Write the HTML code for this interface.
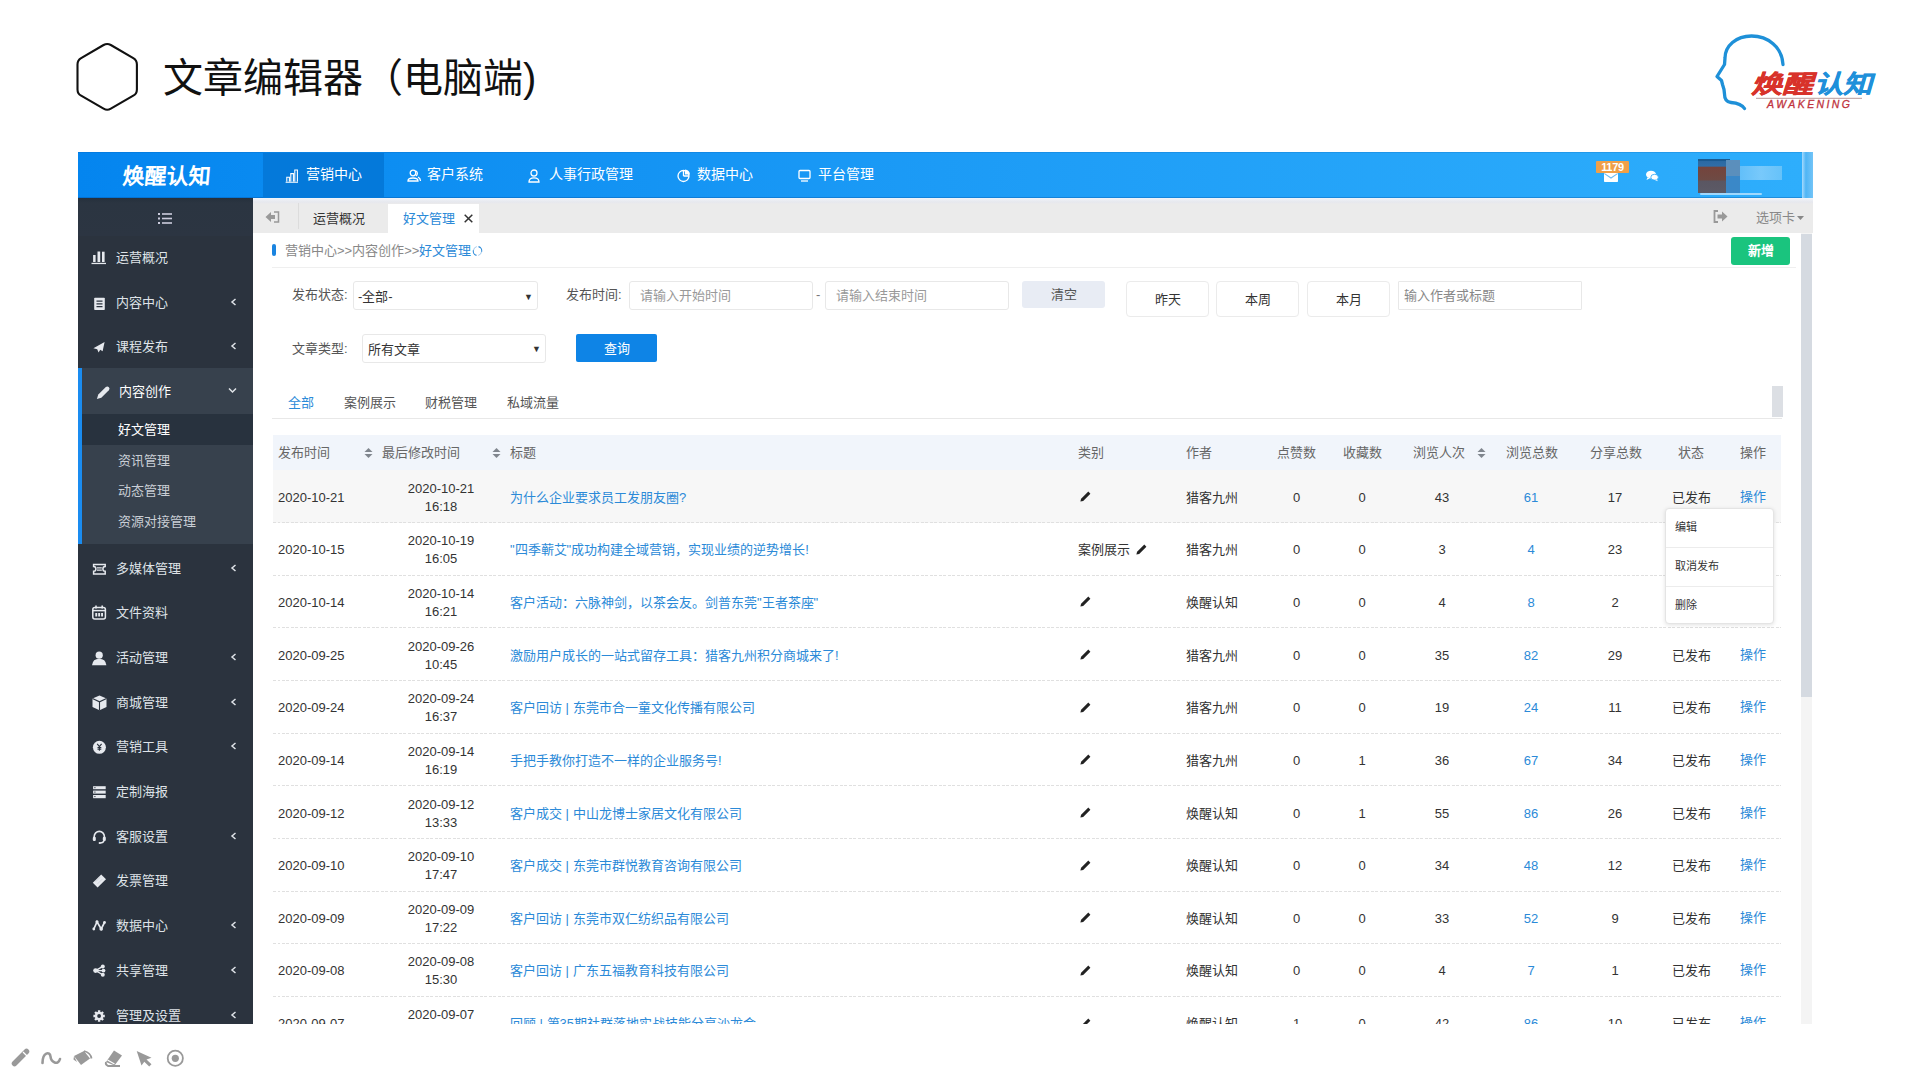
<!DOCTYPE html>
<html lang="zh-CN"><head><meta charset="utf-8">
<style>
*{box-sizing:border-box;margin:0;padding:0}
html,body{width:1920px;height:1080px;overflow:hidden;background:#fff}
body{position:relative;font-family:"Liberation Sans",sans-serif;color:#333}
.a{position:absolute;white-space:nowrap}
svg.a{overflow:visible}
#app{position:absolute;left:78px;top:152px;width:1735px;height:872px;overflow:hidden;background:#fff}
#hdr{position:absolute;left:0;top:0;width:1724px;height:46px;background:linear-gradient(90deg,#0485ef 0%,#0a8bf1 12%,#1c9bf6 50%,#2eaefc 100%);border-top:1px solid rgba(0,80,160,0.18);border-bottom:1px solid rgba(0,70,150,0.3)}
#hstrip{position:absolute;left:1724px;top:0;width:11px;height:46px;background:linear-gradient(90deg,#a6dafc,#4fb5f5 35%,#73c4f7)}
#side{position:absolute;left:0;top:46px;width:175px;height:826px;background:#2b333e}
#tabs{position:absolute;left:175px;top:46px;width:1560px;height:35px;background:linear-gradient(180deg,#f2f5fa 0,#e6e8ee 4px,#ebebeb 6px)}
#sb{position:absolute;left:1723px;top:81px;width:11px;height:791px;background:#f4f4f4}
#sbt{position:absolute;left:1723px;top:82px;width:11px;height:463px;background:#d5dae1}
.nav{position:absolute;top:0;height:46px;line-height:45px;font-size:14px;color:#fff}
.si{position:absolute;left:0;width:175px;height:45px;line-height:45px;font-size:13px;color:#dfe3e8}
.si .t{position:absolute;left:38px;top:1px}
.si svg{position:absolute;left:14px;top:16px;overflow:visible}
.si svg.chev{position:absolute;left:152px;top:19px;width:7px;height:8px}
.sub{position:absolute;left:0;width:175px;height:30.5px;line-height:30px;font-size:13px;color:#c9ced5}
.sub .t{position:absolute;left:40px;top:2px}
.th{position:absolute;top:435px;height:34px;line-height:35px;font-size:13px;color:#666}
.cell{position:absolute;font-size:13px;color:#333;line-height:18px}
.lk{color:#2b8ad8}
.btn{position:absolute;border:1px solid #ebebeb;border-radius:4px;background:#fff;font-size:13px;color:#333;text-align:center}
.inp{position:absolute;border:1px solid #e8e8e8;border-radius:3px;background:#fff;font-size:13px;color:#999}
</style></head>
<body>

<svg class="a" style="left:74px;top:41px" width="66" height="72" viewBox="0 0 66 72">
<path d="M36.82 4.02 L59.28 17.18 Q62.90 19.30 62.90 23.50 L62.90 48.40 Q62.90 52.60 59.27 54.70 L36.83 67.70 Q33.20 69.80 29.57 67.70 L7.13 54.70 Q3.50 52.60 3.50 48.40 L3.50 23.50 Q3.50 19.30 7.12 17.18 L29.58 4.02 Q33.20 1.90 36.82 4.02 Z" fill="none" stroke="#111" stroke-width="2.1"/>
</svg>
<div class="a" style="left:163px;top:55px;font-size:40px;line-height:46px;color:#111">文章编辑器（电脑端)</div>

<svg class="a" style="left:0;top:0" width="1920" height="130" viewBox="0 0 1920 130">
<path d="M1783,64.5 C1782,47 1768,36 1751.5,36 C1736,36 1725,46 1725,58 L1724.5,64.5 L1717,76.5 L1721.5,80.5 L1722.5,84.5 L1724,89.5 L1724.5,94 C1724.5,99 1726,102 1731,102.5 C1737,103 1742,104.5 1744.5,108.5" fill="none" stroke="#1e90d8" stroke-width="3.3" stroke-linecap="round" stroke-linejoin="round"/>
<text x="1751" y="92.5" font-family="Liberation Sans" font-weight="bold" font-style="italic" font-size="25" fill="#d8322a" stroke="#d8322a" stroke-width="0.4" textLength="62" lengthAdjust="spacingAndGlyphs">焕醒</text>
<text x="1814" y="92.5" font-family="Liberation Sans" font-weight="bold" font-style="italic" font-size="25" fill="#1f90da" stroke="#1f90da" stroke-width="0.4" textLength="58" lengthAdjust="spacingAndGlyphs">认知</text>
<line x1="1756" y1="98.3" x2="1862" y2="98.3" stroke="#b89a9a" stroke-width="1"/>
<text x="1767" y="107.8" font-family="Liberation Sans" font-style="italic" font-size="10.5" fill="#c0343e" stroke="#c0343e" stroke-width="0.3" textLength="83" lengthAdjust="spacing">AWAKENING</text>
</svg>

<div id="app">
<div id="hdr"></div><div id="hstrip"></div>
<div class="a" style="left:44.5px;top:11.5px;font-size:22px;line-height:26px;font-weight:bold;color:#fff;transform:skewX(-5deg)">焕醒认知</div>
<div class="a" style="left:185px;top:1px;width:121px;height:45px;background:#0479da"></div>
<svg class="a" style="left:207px;top:17px" width="14" height="14" viewBox="0 0 14 14"><path d="M0.6 13.2 H13 M1.8 12.6 V8.2 H4.4 V12.6 M5.8 12.6 V4.6 H8.4 V12.6 M9.8 12.6 V1 H12.4 V12.6" stroke="#fff" fill="none" stroke-width="1.1"/></svg>
<div class="nav" style="left:228px">营销中心</div>
<svg class="a" style="left:329px;top:17px" width="14" height="14" viewBox="0 0 14 14"><circle cx="6" cy="4" r="2.8" stroke="#fff" fill="none" stroke-width="1.3"/><path d="M1 12 C1 8 11 8 11 12 Z" stroke="#fff" fill="none" stroke-width="1.3"/><path d="M9 2 A3 3 0 0 1 9 7 M11 8 C13 9 13.5 10 13.5 12" stroke="#fff" fill="none" stroke-width="1.3"/></svg>
<div class="nav" style="left:349px">客户系统</div>
<svg class="a" style="left:450px;top:17px" width="14" height="14" viewBox="0 0 14 14"><circle cx="6" cy="4" r="3" stroke="#fff" fill="none" stroke-width="1.3"/><path d="M1 13 C1 7.5 11 7.5 11 13 Z" stroke="#fff" fill="none" stroke-width="1.3"/></svg>
<div class="nav" style="left:471px">人事行政管理</div>
<svg class="a" style="left:599px;top:17px" width="14" height="14" viewBox="0 0 14 14"><circle cx="6.5" cy="7" r="5.5" stroke="#fff" fill="none" stroke-width="1.3"/><path d="M6.5 7 V1.5 M6.5 7 H12" stroke="#fff" fill="none" stroke-width="1.3"/><path d="M8 0.5 A5.5 5.5 0 0 1 13 5.5 H8 Z" fill="#fff"/></svg>
<div class="nav" style="left:619px">数据中心</div>
<svg class="a" style="left:720px;top:17px" width="14" height="14" viewBox="0 0 14 14"><rect x="1" y="1.5" width="11" height="8" rx="1" stroke="#fff" fill="none" stroke-width="1.3"/><path d="M3 12 H10" stroke="#fff" fill="none" stroke-width="1.3"/></svg>
<div class="nav" style="left:740px">平台管理</div>
<div class="a" style="left:1518px;top:8.5px;width:33px;height:12px;background:#f0a048;border-radius:1px;color:#fff;font-size:11px;font-weight:bold;line-height:12px;text-align:center;letter-spacing:-0.3px">1179</div>
<svg class="a" style="left:1526px;top:20.5px" width="14" height="9" viewBox="0 0 14 9"><rect x="0" y="0" width="14" height="9" rx="0.8" fill="#fff"/><path d="M0.5 0.6 L7 5 L13.5 0.6" stroke="#6cbdf5" stroke-width="1.1" fill="none"/></svg>
<svg class="a" style="left:1567px;top:18px" width="14" height="12" viewBox="0 0 14 12"><ellipse cx="6" cy="4.6" rx="5" ry="3.9" fill="#fff"/><path d="M2.5 7.5 L1.5 10 L5 8.3 Z" fill="#fff"/><ellipse cx="9.6" cy="7.2" rx="3.8" ry="2.9" fill="#fff" stroke="#2ba6f8" stroke-width="0.8"/><path d="M11.5 9.3 L13 11.3 L9.8 10 Z" fill="#fff"/></svg>
<div class="a" style="left:1620px;top:7.5px;width:28px;height:33.5px;background:linear-gradient(180deg,#2a68a0 0,#2f6ea8 19%,#74443c 21%,#6e4a44 60%,#5a5662 64%,#5c5a66 100%)"></div>
<div class="a" style="left:1620px;top:7px;width:32px;height:1.5px;background:#1a5a90"></div>
<div class="a" style="left:1648px;top:8px;width:14px;height:33px;background:linear-gradient(180deg,#5b8fbc 0,#5b8fbc 50%,#3a88c8 50%,#3a88c8 100%)"></div>
<div class="a" style="left:1662px;top:14px;width:42px;height:14px;background:linear-gradient(90deg,#62bff9,#78c9fb 50%,#66c2f9)"></div>
<div class="a" style="left:1622px;top:41px;width:62px;height:2px;background:#9fd8fd;border-radius:1px"></div>
<div id="side"></div>
<div class="a" style="left:0;top:46px;width:175px;height:38px;background:linear-gradient(180deg,#25303c 0,#2b3541 5px,#2c3542 100%)"></div>
<svg class="a" style="left:80px;top:61px" width="14" height="11" viewBox="0 0 14 11"><rect x="0" y="0" width="2" height="2" fill="#ccd"/><rect x="0" y="4.5" width="2" height="2" fill="#ccd"/><rect x="0" y="9" width="2" height="2" fill="#ccd"/><rect x="4" y="0.2" width="10" height="1.6" fill="#ccd"/><rect x="4" y="4.7" width="10" height="1.6" fill="#ccd"/><rect x="4" y="9.2" width="10" height="1.6" fill="#ccd"/></svg>
<div class="a" style="left:0;top:216px;width:175px;height:176px;background:#37414d"></div>
<div class="a" style="left:3px;top:262px;width:172px;height:30.5px;background:#28323e"></div>
<div class="a" style="left:0;top:216px;width:4px;height:176px;background:#1a8cf0"></div>
<div class="si" style="top:82.0px"><svg width="15" height="15" viewBox="0 0 15 15"><rect x="-0.5" y="12.8" width="14.5" height="1.3" fill="#e6e9ee"/><rect x="1.1" y="5" width="2.5" height="7" fill="#e6e9ee"/><rect x="5.5" y="1.5" width="2.7" height="10.5" fill="#e6e9ee"/><rect x="10" y="1.7" width="2.6" height="10.3" fill="#e6e9ee"/></svg><span class="t">运营概况</span></div>
<div class="si" style="top:126.7px"><svg width="15" height="15" viewBox="0 0 15 15"><rect x="2.2" y="2.8" width="10.6" height="12.2" rx="0.8" fill="#e6e9ee"/><path d="M4.5 6.2 H10.5 M4.5 8.9 H10.5 M4.5 11.6 H10.5" stroke="#2b333e" stroke-width="1.3"/></svg><span class="t">内容中心</span><svg class="chev" viewBox="0 0 7 8"><path d="M5.5 1 L2 4 L5.5 7" stroke="#dfe3e8" stroke-width="1.5" fill="none"/></svg></div>
<div class="si" style="top:171.4px"><svg width="15" height="15" viewBox="0 0 15 15"><path d="M12.6 3 L1.4 9.2 L5.2 10.2 L6.6 13.6 L8.2 10.8 L10.6 12.2 Z" fill="#e6e9ee"/></svg><span class="t">课程发布</span><svg class="chev" viewBox="0 0 7 8"><path d="M5.5 1 L2 4 L5.5 7" stroke="#dfe3e8" stroke-width="1.5" fill="none"/></svg></div>
<div class="si" style="top:216.1px;color:#fff"><svg width="15" height="15" style="left:18px" viewBox="0 0 15 15"><path d="M0.9 15 L2.3 10.6 L9.8 3.1 Q11.4 1.7 12.9 3.2 Q14.3 4.7 12.8 6.2 L5.3 13.7 Z" fill="#e6e9ee"/></svg><span class="t" style="left:41px">内容创作</span><svg class="chev" style="top:19px;width:9px;height:7px;left:150px" viewBox="0 0 9 7"><path d="M1 1.5 L4.5 5 L8 1.5" stroke="#dfe3e8" stroke-width="1.5" fill="none"/></svg></div>
<div class="sub" style="top:261.1px;color:#fff"><span class="t">好文管理</span></div>
<div class="sub" style="top:291.6px;color:#c9ced5"><span class="t">资讯管理</span></div>
<div class="sub" style="top:322.1px;color:#c9ced5"><span class="t">动态管理</span></div>
<div class="sub" style="top:352.6px;color:#c9ced5"><span class="t">资源对接管理</span></div>
<div class="si" style="top:392.5px"><svg width="15" height="15" viewBox="0 0 15 15"><path d="M1.6 3.4 H13.2 V5.6 A2.3 2.3 0 0 0 13.2 10.2 V12.9 H1.6 V10.2 A2.3 2.3 0 0 0 1.6 5.6 Z" stroke="#e6e9ee" fill="none" stroke-width="1.5"/><path d="M5 6.8 H9.8 M5 9.2 H9.8" stroke="#e6e9ee" stroke-width="1.3"/></svg><span class="t">多媒体管理</span><svg class="chev" viewBox="0 0 7 8"><path d="M5.5 1 L2 4 L5.5 7" stroke="#dfe3e8" stroke-width="1.5" fill="none"/></svg></div>
<div class="si" style="top:437.2px"><svg width="15" height="15" viewBox="0 0 15 15"><rect x="0.8" y="2.6" width="12.6" height="11.4" rx="2" stroke="#e6e9ee" fill="none" stroke-width="1.5"/><path d="M0.8 5.6 H13.4" stroke="#e6e9ee" fill="none" stroke-width="1.5"/><path d="M4 0.5 V3.5 M10.2 0.5 V3.5" stroke="#e6e9ee" stroke-width="1.6"/><rect x="3.3" y="8" width="1.9" height="3.5" fill="#e6e9ee"/><rect x="6.2" y="8" width="1.9" height="3.5" fill="#e6e9ee"/><rect x="9.1" y="8" width="1.9" height="3.5" fill="#e6e9ee"/></svg><span class="t">文件资料</span></div>
<div class="si" style="top:481.9px"><svg width="15" height="15" viewBox="0 0 15 15"><circle cx="7.2" cy="5.2" r="3.6" fill="#e6e9ee"/><path d="M0 15.2 Q0.8 8.8 7.2 8.8 Q13.6 8.8 14.4 15.2 Z" fill="#e6e9ee"/></svg><span class="t">活动管理</span><svg class="chev" viewBox="0 0 7 8"><path d="M5.5 1 L2 4 L5.5 7" stroke="#dfe3e8" stroke-width="1.5" fill="none"/></svg></div>
<div class="si" style="top:526.6px"><svg width="15" height="15" viewBox="0 0 15 15"><path d="M7.5 0.5 L14.5 3.6 L14.5 12 L7.5 15.3 L0.5 12 L0.5 3.6 Z" fill="#e6e9ee"/><path d="M0.5 3.6 L7.5 6.8 L14.5 3.6 M7.5 6.8 V15.3" stroke="#2b333e" stroke-width="1.1" fill="none"/></svg><span class="t">商城管理</span><svg class="chev" viewBox="0 0 7 8"><path d="M5.5 1 L2 4 L5.5 7" stroke="#dfe3e8" stroke-width="1.5" fill="none"/></svg></div>
<div class="si" style="top:571.3px"><svg width="15" height="15" viewBox="0 0 15 15"><circle cx="7.4" cy="8.3" r="6.5" fill="#e6e9ee"/><path d="M5.2 4.8 L7.4 7.6 L9.6 4.8 M7.4 7.6 V11.8 M5.5 8.6 H9.3 M5.5 10.2 H9.3" stroke="#2b333e" stroke-width="1.1" fill="none"/></svg><span class="t">营销工具</span><svg class="chev" viewBox="0 0 7 8"><path d="M5.5 1 L2 4 L5.5 7" stroke="#dfe3e8" stroke-width="1.5" fill="none"/></svg></div>
<div class="si" style="top:616.0px"><svg width="15" height="15" viewBox="0 0 15 15"><rect x="1.1" y="2.2" width="12.6" height="3" fill="#e6e9ee"/><rect x="1.1" y="6.6" width="12.6" height="3" fill="#e6e9ee"/><rect x="1.1" y="11" width="12.6" height="3.2" fill="#e6e9ee"/><path d="M2.3 3.7 H3.5 M2.3 8.1 H3.5 M2.3 12.6 H3.5" stroke="#2b333e" stroke-width="1"/></svg><span class="t">定制海报</span></div>
<div class="si" style="top:660.7px"><svg width="15" height="15" viewBox="0 0 15 15"><path d="M2.2 9.5 V7.5 A5.1 5.1 0 0 1 12.4 7.5 V9.5" stroke="#e6e9ee" stroke-width="1.6" fill="none"/><rect x="0.8" y="7.8" width="3" height="4.2" rx="1.2" fill="#e6e9ee"/><rect x="10.8" y="7.8" width="3" height="4.2" rx="1.2" fill="#e6e9ee"/><path d="M12 11.5 Q11.5 14 8 14" stroke="#e6e9ee" stroke-width="1.4" fill="none"/><circle cx="7.6" cy="14" r="1" fill="#e6e9ee"/></svg><span class="t">客服设置</span><svg class="chev" viewBox="0 0 7 8"><path d="M5.5 1 L2 4 L5.5 7" stroke="#dfe3e8" stroke-width="1.5" fill="none"/></svg></div>
<div class="si" style="top:705.4px"><svg width="15" height="15" viewBox="0 0 15 15"><path d="M0.8 9.8 L9.2 1.4 L14 6.2 L5.6 14.6 Z" fill="#e6e9ee"/><path d="M3.6 8.8 L8.2 4.2 M5.6 10.8 L10.2 6.2" stroke="#c9ced6" stroke-width="0.8"/></svg><span class="t">发票管理</span></div>
<div class="si" style="top:750.1px"><svg width="15" height="15" viewBox="0 0 15 15"><path d="M1.8 11 L5 3.8 L9.2 11 L12.5 4.5" stroke="#e6e9ee" stroke-width="1.7" fill="none"/><circle cx="1.8" cy="11" r="1.4" fill="#e6e9ee"/><circle cx="5" cy="3.8" r="1.6" fill="#e6e9ee"/><circle cx="9.2" cy="11" r="1.8" fill="#e6e9ee"/><circle cx="12.5" cy="4.5" r="1.4" fill="#e6e9ee"/></svg><span class="t">数据中心</span><svg class="chev" viewBox="0 0 7 8"><path d="M5.5 1 L2 4 L5.5 7" stroke="#dfe3e8" stroke-width="1.5" fill="none"/></svg></div>
<div class="si" style="top:794.8px"><svg width="15" height="15" viewBox="0 0 15 15"><circle cx="3.6" cy="7.6" r="2.4" fill="#e6e9ee"/><circle cx="10.8" cy="3.4" r="2" fill="#e6e9ee"/><circle cx="11.5" cy="7.6" r="1.9" fill="#e6e9ee"/><circle cx="10.8" cy="11.8" r="2" fill="#e6e9ee"/><path d="M3.6 7.6 L10.8 3.4 M3.6 7.6 H11.5 M3.6 7.6 L10.8 11.8" stroke="#e6e9ee" stroke-width="1.3"/></svg><span class="t">共享管理</span><svg class="chev" viewBox="0 0 7 8"><path d="M5.5 1 L2 4 L5.5 7" stroke="#dfe3e8" stroke-width="1.5" fill="none"/></svg></div>
<div class="si" style="top:839.5px"><svg width="15" height="15" viewBox="0 0 15 15"><circle cx="7.1" cy="8" r="4.3" fill="#e6e9ee"/><path d="M7.1 2.3 V13.7 M1.4 8 H12.8 M3.1 4 L11.1 12 M11.1 4 L3.1 12" stroke="#e6e9ee" stroke-width="2.4"/><circle cx="7.1" cy="8" r="1.9" fill="#2b333e"/></svg><span class="t">管理及设置</span><svg class="chev" viewBox="0 0 7 8"><path d="M5.5 1 L2 4 L5.5 7" stroke="#dfe3e8" stroke-width="1.5" fill="none"/></svg></div>
<div id="tabs"></div>
<svg class="a" style="left:187px;top:59px" width="15" height="12" viewBox="0 0 15 12"><path d="M0.5 6 L6 1 V4 H10 V8 H6 V11 Z" fill="#999"/><path d="M9 1 H13.5 V11 H9" stroke="#999" stroke-width="1.5" fill="none"/></svg>
<div class="a" style="left:220px;top:51px;width:1px;height:26px;background:#dcdcdc"></div>
<div class="a" style="left:235px;top:49px;height:35px;line-height:36px;font-size:13px;color:#333">运营概况</div>
<div class="a" style="left:310px;top:52px;width:91px;height:29px;background:#fff"></div>
<div class="a" style="left:325px;top:49px;height:35px;line-height:36px;font-size:13px;color:#2b8ad8">好文管理</div>
<svg class="a" style="left:386px;top:62px" width="9" height="9" viewBox="0 0 9 9"><path d="M0.7 0.7 L8.3 8.3 M8.3 0.7 L0.7 8.3" stroke="#333" stroke-width="1.5"/></svg>
<svg class="a" style="left:1635px;top:58px" width="15" height="13" viewBox="0 0 15 13"><path d="M5 1 H1.5 V12 H5" stroke="#999" stroke-width="1.8" fill="none"/><path d="M14.5 6.5 L9 1.5 V4.5 H4.5 V8.5 H9 V11.5 Z" fill="#999"/></svg>
<div class="a" style="left:1678px;top:48px;height:35px;line-height:36px;font-size:13px;color:#888">选项卡</div>
<svg class="a" style="left:1719px;top:64px" width="7" height="4" viewBox="0 0 7 4"><path d="M0 0 H7 L3.5 4 Z" fill="#888"/></svg>
<div id="sb"></div><div id="sbt"></div>
<div class="a" style="left:194px;top:92px;width:4px;height:12px;border-radius:2px;background:#1a84e0"></div>
<div class="a" style="left:207px;top:92px;font-size:13px;line-height:14px;color:#888">营销中心&gt;&gt;内容创作&gt;&gt;<span style="color:#2b8ad8">好文管理</span></div>
<svg class="a" style="left:394px;top:93px" width="11" height="12" viewBox="0 0 11 12"><path d="M6.5 1.6 A4.3 4.3 0 0 1 9.6 6.8" stroke="#2b8ad8" stroke-width="1.1" fill="none"/><path d="M4.5 10.4 A4.3 4.3 0 0 1 1.4 5.2" stroke="#2b8ad8" stroke-width="1.1" fill="none"/><path d="M1.5 5.2 A4.3 4.3 0 0 1 4.8 1.6 M9.5 6.8 A4.3 4.3 0 0 1 6.2 10.4" stroke="#9cc6ea" stroke-width="0.9" fill="none"/></svg>
<div class="a" style="left:194px;top:115px;width:1524px;height:1px;background:#efefef"></div>
<div class="a" style="left:1653px;top:85px;width:59px;height:28px;border-radius:3px;background:#1ac47e;color:#fff;font-size:13px;font-weight:bold;line-height:28px;text-align:center">新增</div>
<div class="a" style="left:214px;top:135px;font-size:13px;line-height:16px;color:#555">发布状态:</div>
<div class="inp" style="left:275px;top:129px;width:185px;height:29px;color:#333;line-height:30px;padding-left:4px">-全部-<span style="position:absolute;right:4px;top:0;font-size:9px;color:#333">&#9660;</span></div>
<div class="a" style="left:488px;top:135px;font-size:13px;line-height:16px;color:#555">发布时间:</div>
<div class="inp" style="left:551px;top:129px;width:184px;height:29px;line-height:27px;padding-left:10px">请输入开始时间</div>
<div class="a" style="left:738px;top:135px;font-size:13px;line-height:16px;color:#777">-</div>
<div class="inp" style="left:747px;top:129px;width:184px;height:29px;line-height:27px;padding-left:10px">请输入结束时间</div>
<div class="a" style="left:944px;top:129px;width:83px;height:27px;border-radius:3px;background:#e8ecf4;color:#555;font-size:13px;line-height:27px;text-align:center">清空</div>
<div class="btn" style="left:1048px;top:129px;width:83px;height:36px;line-height:36px">昨天</div>
<div class="btn" style="left:1138px;top:129px;width:83px;height:36px;line-height:36px">本周</div>
<div class="btn" style="left:1229px;top:129px;width:83px;height:36px;line-height:36px">本月</div>
<div class="inp" style="left:1320px;top:129px;width:184px;height:29px;line-height:27px;padding-left:5px;color:#888;border-radius:1px">输入作者或标题</div>
<div class="a" style="left:214px;top:189px;font-size:13px;line-height:16px;color:#555">文章类型:</div>
<div class="inp" style="left:284px;top:182px;width:184px;height:29px;color:#333;line-height:29px;padding-left:5px">所有文章<span style="position:absolute;right:4px;top:0;font-size:9px;color:#333">&#9660;</span></div>
<div class="a" style="left:498px;top:182px;width:81px;height:28px;border-radius:2px;background:#0e84e6;color:#fff;font-size:13px;line-height:30px;text-align:center">查询</div>
<div class="a" style="left:210px;top:243px;font-size:13px;line-height:16px;color:#2b8ad8">全部</div>
<div class="a" style="left:266px;top:243px;font-size:13px;line-height:16px;color:#555">案例展示</div>
<div class="a" style="left:347px;top:243px;font-size:13px;line-height:16px;color:#555">财税管理</div>
<div class="a" style="left:429px;top:243px;font-size:13px;line-height:16px;color:#555">私域流量</div>
<div class="a" style="left:194px;top:266px;width:1510px;height:1px;background:#e8e8e8"></div>
<div class="a" style="left:1694px;top:234px;width:11px;height:31px;background:#dcdfe4"></div>
<div class="a" style="left:195px;top:283px;width:1508px;height:35px;background:#f1f5fb"></div>
<div class="th" style="left:200px;top:283px">发布时间</div>
<div class="th" style="left:304px;top:283px">最后修改时间</div>
<div class="th" style="left:432px;top:283px">标题</div>
<div class="th" style="left:1000px;top:283px">类别</div>
<div class="th" style="left:1108px;top:283px">作者</div>
<div class="th" style="left:1199px;top:283px">点赞数</div>
<div class="th" style="left:1265px;top:283px">收藏数</div>
<div class="th" style="left:1335px;top:283px">浏览人次</div>
<div class="th" style="left:1428px;top:283px">浏览总数</div>
<div class="th" style="left:1512px;top:283px">分享总数</div>
<div class="th" style="left:1600px;top:283px">状态</div>
<div class="th" style="left:1662px;top:283px">操作</div>
<svg class="a" style="left:286px;top:296px" width="9" height="10" viewBox="0 0 9 10"><path d="M0.5 4 L4.5 0 L8.5 4 Z M0.5 6 L4.5 10 L8.5 6 Z" fill="#80868e"/></svg>
<svg class="a" style="left:414px;top:296px" width="9" height="10" viewBox="0 0 9 10"><path d="M0.5 4 L4.5 0 L8.5 4 Z M0.5 6 L4.5 10 L8.5 6 Z" fill="#80868e"/></svg>
<svg class="a" style="left:1399px;top:296px" width="9" height="10" viewBox="0 0 9 10"><path d="M0.5 4 L4.5 0 L8.5 4 Z M0.5 6 L4.5 10 L8.5 6 Z" fill="#80868e"/></svg>
<div class="a" style="left:195px;top:317.88px;width:1508px;height:52.64px;background:#f7f7f7"></div>
<div class="a" style="left:195px;top:370.02px;width:1508px;height:1px;background:repeating-linear-gradient(90deg,#e0e0e0 0 2.6px,transparent 2.6px 4.5px)"></div>
<div class="cell" style="left:200px;top:336.70px">2020-10-21</div>
<div class="cell" style="left:303px;top:327.70px;width:120px;text-align:center">2020-10-21<br>16:18</div>
<div class="cell lk" style="left:432px;top:336.70px">为什么企业要求员工发朋友圈?</div>
<svg class="a" style="left:1002px;top:339px" width="11" height="11" viewBox="0 0 11 11"><path d="M8.3 0.6 L10.4 2.7 L3.2 9.9 L0.4 10.6 L1.1 7.8 Z" fill="#222"/></svg>
<div class="cell" style="left:1108px;top:336.70px">猎客九州</div>
<div class="cell" style="left:1198.5px;top:336.70px;width:40px;text-align:center">0</div>
<div class="cell" style="left:1264.0px;top:336.70px;width:40px;text-align:center">0</div>
<div class="cell" style="left:1344.0px;top:336.70px;width:40px;text-align:center">43</div>
<div class="cell lk" style="left:1433.0px;top:336.70px;width:40px;text-align:center">61</div>
<div class="cell" style="left:1517.0px;top:336.70px;width:40px;text-align:center">17</div>
<div class="cell" style="left:1594px;top:336.70px">已发布</div>
<div class="cell lk" style="left:1662px;top:335.70px">操作</div>
<div class="a" style="left:195px;top:422.66px;width:1508px;height:1px;background:repeating-linear-gradient(90deg,#e0e0e0 0 2.6px,transparent 2.6px 4.5px)"></div>
<div class="cell" style="left:200px;top:389.34px">2020-10-15</div>
<div class="cell" style="left:303px;top:380.34px;width:120px;text-align:center">2020-10-19<br>16:05</div>
<div class="cell lk" style="left:432px;top:389.34px">"四季蕲艾"成功构建全域营销，实现业绩的逆势增长!</div>
<div class="cell" style="left:1000px;top:389.34px">案例展示</div>
<svg class="a" style="left:1058px;top:392px" width="11" height="11" viewBox="0 0 11 11"><path d="M8.3 0.6 L10.4 2.7 L3.2 9.9 L0.4 10.6 L1.1 7.8 Z" fill="#222"/></svg>
<div class="cell" style="left:1108px;top:389.34px">猎客九州</div>
<div class="cell" style="left:1198.5px;top:389.34px;width:40px;text-align:center">0</div>
<div class="cell" style="left:1264.0px;top:389.34px;width:40px;text-align:center">0</div>
<div class="cell" style="left:1344.0px;top:389.34px;width:40px;text-align:center">3</div>
<div class="cell lk" style="left:1433.0px;top:389.34px;width:40px;text-align:center">4</div>
<div class="cell" style="left:1517.0px;top:389.34px;width:40px;text-align:center">23</div>
<div class="cell lk" style="left:1662px;top:388.34px">操作</div>
<div class="a" style="left:195px;top:475.30px;width:1508px;height:1px;background:repeating-linear-gradient(90deg,#e0e0e0 0 2.6px,transparent 2.6px 4.5px)"></div>
<div class="cell" style="left:200px;top:441.98px">2020-10-14</div>
<div class="cell" style="left:303px;top:432.98px;width:120px;text-align:center">2020-10-14<br>16:21</div>
<div class="cell lk" style="left:432px;top:441.98px">客户活动：六脉神剑，以茶会友。剑普东莞"王者茶座"</div>
<svg class="a" style="left:1002px;top:444px" width="11" height="11" viewBox="0 0 11 11"><path d="M8.3 0.6 L10.4 2.7 L3.2 9.9 L0.4 10.6 L1.1 7.8 Z" fill="#222"/></svg>
<div class="cell" style="left:1108px;top:441.98px">焕醒认知</div>
<div class="cell" style="left:1198.5px;top:441.98px;width:40px;text-align:center">0</div>
<div class="cell" style="left:1264.0px;top:441.98px;width:40px;text-align:center">0</div>
<div class="cell" style="left:1344.0px;top:441.98px;width:40px;text-align:center">4</div>
<div class="cell lk" style="left:1433.0px;top:441.98px;width:40px;text-align:center">8</div>
<div class="cell" style="left:1517.0px;top:441.98px;width:40px;text-align:center">2</div>
<div class="cell lk" style="left:1662px;top:440.98px">操作</div>
<div class="a" style="left:195px;top:527.94px;width:1508px;height:1px;background:repeating-linear-gradient(90deg,#e0e0e0 0 2.6px,transparent 2.6px 4.5px)"></div>
<div class="cell" style="left:200px;top:494.62px">2020-09-25</div>
<div class="cell" style="left:303px;top:485.62px;width:120px;text-align:center">2020-09-26<br>10:45</div>
<div class="cell lk" style="left:432px;top:494.62px">激励用户成长的一站式留存工具：猎客九州积分商城来了!</div>
<svg class="a" style="left:1002px;top:497px" width="11" height="11" viewBox="0 0 11 11"><path d="M8.3 0.6 L10.4 2.7 L3.2 9.9 L0.4 10.6 L1.1 7.8 Z" fill="#222"/></svg>
<div class="cell" style="left:1108px;top:494.62px">猎客九州</div>
<div class="cell" style="left:1198.5px;top:494.62px;width:40px;text-align:center">0</div>
<div class="cell" style="left:1264.0px;top:494.62px;width:40px;text-align:center">0</div>
<div class="cell" style="left:1344.0px;top:494.62px;width:40px;text-align:center">35</div>
<div class="cell lk" style="left:1433.0px;top:494.62px;width:40px;text-align:center">82</div>
<div class="cell" style="left:1517.0px;top:494.62px;width:40px;text-align:center">29</div>
<div class="cell" style="left:1594px;top:494.62px">已发布</div>
<div class="cell lk" style="left:1662px;top:493.62px">操作</div>
<div class="a" style="left:195px;top:580.58px;width:1508px;height:1px;background:repeating-linear-gradient(90deg,#e0e0e0 0 2.6px,transparent 2.6px 4.5px)"></div>
<div class="cell" style="left:200px;top:547.26px">2020-09-24</div>
<div class="cell" style="left:303px;top:538.26px;width:120px;text-align:center">2020-09-24<br>16:37</div>
<div class="cell lk" style="left:432px;top:547.26px">客户回访 | 东莞市合一童文化传播有限公司</div>
<svg class="a" style="left:1002px;top:550px" width="11" height="11" viewBox="0 0 11 11"><path d="M8.3 0.6 L10.4 2.7 L3.2 9.9 L0.4 10.6 L1.1 7.8 Z" fill="#222"/></svg>
<div class="cell" style="left:1108px;top:547.26px">猎客九州</div>
<div class="cell" style="left:1198.5px;top:547.26px;width:40px;text-align:center">0</div>
<div class="cell" style="left:1264.0px;top:547.26px;width:40px;text-align:center">0</div>
<div class="cell" style="left:1344.0px;top:547.26px;width:40px;text-align:center">19</div>
<div class="cell lk" style="left:1433.0px;top:547.26px;width:40px;text-align:center">24</div>
<div class="cell" style="left:1517.0px;top:547.26px;width:40px;text-align:center">11</div>
<div class="cell" style="left:1594px;top:547.26px">已发布</div>
<div class="cell lk" style="left:1662px;top:546.26px">操作</div>
<div class="a" style="left:195px;top:633.22px;width:1508px;height:1px;background:repeating-linear-gradient(90deg,#e0e0e0 0 2.6px,transparent 2.6px 4.5px)"></div>
<div class="cell" style="left:200px;top:599.90px">2020-09-14</div>
<div class="cell" style="left:303px;top:590.90px;width:120px;text-align:center">2020-09-14<br>16:19</div>
<div class="cell lk" style="left:432px;top:599.90px">手把手教你打造不一样的企业服务号!</div>
<svg class="a" style="left:1002px;top:602px" width="11" height="11" viewBox="0 0 11 11"><path d="M8.3 0.6 L10.4 2.7 L3.2 9.9 L0.4 10.6 L1.1 7.8 Z" fill="#222"/></svg>
<div class="cell" style="left:1108px;top:599.90px">猎客九州</div>
<div class="cell" style="left:1198.5px;top:599.90px;width:40px;text-align:center">0</div>
<div class="cell" style="left:1264.0px;top:599.90px;width:40px;text-align:center">1</div>
<div class="cell" style="left:1344.0px;top:599.90px;width:40px;text-align:center">36</div>
<div class="cell lk" style="left:1433.0px;top:599.90px;width:40px;text-align:center">67</div>
<div class="cell" style="left:1517.0px;top:599.90px;width:40px;text-align:center">34</div>
<div class="cell" style="left:1594px;top:599.90px">已发布</div>
<div class="cell lk" style="left:1662px;top:598.90px">操作</div>
<div class="a" style="left:195px;top:685.86px;width:1508px;height:1px;background:repeating-linear-gradient(90deg,#e0e0e0 0 2.6px,transparent 2.6px 4.5px)"></div>
<div class="cell" style="left:200px;top:652.54px">2020-09-12</div>
<div class="cell" style="left:303px;top:643.54px;width:120px;text-align:center">2020-09-12<br>13:33</div>
<div class="cell lk" style="left:432px;top:652.54px">客户成交 | 中山龙博士家居文化有限公司</div>
<svg class="a" style="left:1002px;top:655px" width="11" height="11" viewBox="0 0 11 11"><path d="M8.3 0.6 L10.4 2.7 L3.2 9.9 L0.4 10.6 L1.1 7.8 Z" fill="#222"/></svg>
<div class="cell" style="left:1108px;top:652.54px">焕醒认知</div>
<div class="cell" style="left:1198.5px;top:652.54px;width:40px;text-align:center">0</div>
<div class="cell" style="left:1264.0px;top:652.54px;width:40px;text-align:center">1</div>
<div class="cell" style="left:1344.0px;top:652.54px;width:40px;text-align:center">55</div>
<div class="cell lk" style="left:1433.0px;top:652.54px;width:40px;text-align:center">86</div>
<div class="cell" style="left:1517.0px;top:652.54px;width:40px;text-align:center">26</div>
<div class="cell" style="left:1594px;top:652.54px">已发布</div>
<div class="cell lk" style="left:1662px;top:651.54px">操作</div>
<div class="a" style="left:195px;top:738.50px;width:1508px;height:1px;background:repeating-linear-gradient(90deg,#e0e0e0 0 2.6px,transparent 2.6px 4.5px)"></div>
<div class="cell" style="left:200px;top:705.18px">2020-09-10</div>
<div class="cell" style="left:303px;top:696.18px;width:120px;text-align:center">2020-09-10<br>17:47</div>
<div class="cell lk" style="left:432px;top:705.18px">客户成交 | 东莞市群悦教育咨询有限公司</div>
<svg class="a" style="left:1002px;top:708px" width="11" height="11" viewBox="0 0 11 11"><path d="M8.3 0.6 L10.4 2.7 L3.2 9.9 L0.4 10.6 L1.1 7.8 Z" fill="#222"/></svg>
<div class="cell" style="left:1108px;top:705.18px">焕醒认知</div>
<div class="cell" style="left:1198.5px;top:705.18px;width:40px;text-align:center">0</div>
<div class="cell" style="left:1264.0px;top:705.18px;width:40px;text-align:center">0</div>
<div class="cell" style="left:1344.0px;top:705.18px;width:40px;text-align:center">34</div>
<div class="cell lk" style="left:1433.0px;top:705.18px;width:40px;text-align:center">48</div>
<div class="cell" style="left:1517.0px;top:705.18px;width:40px;text-align:center">12</div>
<div class="cell" style="left:1594px;top:705.18px">已发布</div>
<div class="cell lk" style="left:1662px;top:704.18px">操作</div>
<div class="a" style="left:195px;top:791.14px;width:1508px;height:1px;background:repeating-linear-gradient(90deg,#e0e0e0 0 2.6px,transparent 2.6px 4.5px)"></div>
<div class="cell" style="left:200px;top:757.82px">2020-09-09</div>
<div class="cell" style="left:303px;top:748.82px;width:120px;text-align:center">2020-09-09<br>17:22</div>
<div class="cell lk" style="left:432px;top:757.82px">客户回访 | 东莞市双仁纺织品有限公司</div>
<svg class="a" style="left:1002px;top:760px" width="11" height="11" viewBox="0 0 11 11"><path d="M8.3 0.6 L10.4 2.7 L3.2 9.9 L0.4 10.6 L1.1 7.8 Z" fill="#222"/></svg>
<div class="cell" style="left:1108px;top:757.82px">焕醒认知</div>
<div class="cell" style="left:1198.5px;top:757.82px;width:40px;text-align:center">0</div>
<div class="cell" style="left:1264.0px;top:757.82px;width:40px;text-align:center">0</div>
<div class="cell" style="left:1344.0px;top:757.82px;width:40px;text-align:center">33</div>
<div class="cell lk" style="left:1433.0px;top:757.82px;width:40px;text-align:center">52</div>
<div class="cell" style="left:1517.0px;top:757.82px;width:40px;text-align:center">9</div>
<div class="cell" style="left:1594px;top:757.82px">已发布</div>
<div class="cell lk" style="left:1662px;top:756.82px">操作</div>
<div class="a" style="left:195px;top:843.78px;width:1508px;height:1px;background:repeating-linear-gradient(90deg,#e0e0e0 0 2.6px,transparent 2.6px 4.5px)"></div>
<div class="cell" style="left:200px;top:810.46px">2020-09-08</div>
<div class="cell" style="left:303px;top:801.46px;width:120px;text-align:center">2020-09-08<br>15:30</div>
<div class="cell lk" style="left:432px;top:810.46px">客户回访 | 广东五福教育科技有限公司</div>
<svg class="a" style="left:1002px;top:813px" width="11" height="11" viewBox="0 0 11 11"><path d="M8.3 0.6 L10.4 2.7 L3.2 9.9 L0.4 10.6 L1.1 7.8 Z" fill="#222"/></svg>
<div class="cell" style="left:1108px;top:810.46px">焕醒认知</div>
<div class="cell" style="left:1198.5px;top:810.46px;width:40px;text-align:center">0</div>
<div class="cell" style="left:1264.0px;top:810.46px;width:40px;text-align:center">0</div>
<div class="cell" style="left:1344.0px;top:810.46px;width:40px;text-align:center">4</div>
<div class="cell lk" style="left:1433.0px;top:810.46px;width:40px;text-align:center">7</div>
<div class="cell" style="left:1517.0px;top:810.46px;width:40px;text-align:center">1</div>
<div class="cell" style="left:1594px;top:810.46px">已发布</div>
<div class="cell lk" style="left:1662px;top:809.46px">操作</div>
<div class="a" style="left:195px;top:896.42px;width:1508px;height:1px;background:repeating-linear-gradient(90deg,#e0e0e0 0 2.6px,transparent 2.6px 4.5px)"></div>
<div class="cell" style="left:200px;top:863.10px">2020-09-07</div>
<div class="cell" style="left:303px;top:854.10px;width:120px;text-align:center">2020-09-07<br>14:20</div>
<div class="cell lk" style="left:432px;top:863.10px">回顾 | 第35期社群落地实战技能分享沙龙会</div>
<svg class="a" style="left:1002px;top:866px" width="11" height="11" viewBox="0 0 11 11"><path d="M8.3 0.6 L10.4 2.7 L3.2 9.9 L0.4 10.6 L1.1 7.8 Z" fill="#222"/></svg>
<div class="cell" style="left:1108px;top:863.10px">焕醒认知</div>
<div class="cell" style="left:1198.5px;top:863.10px;width:40px;text-align:center">1</div>
<div class="cell" style="left:1264.0px;top:863.10px;width:40px;text-align:center">0</div>
<div class="cell" style="left:1344.0px;top:863.10px;width:40px;text-align:center">42</div>
<div class="cell lk" style="left:1433.0px;top:863.10px;width:40px;text-align:center">86</div>
<div class="cell" style="left:1517.0px;top:863.10px;width:40px;text-align:center">10</div>
<div class="cell" style="left:1594px;top:863.10px">已发布</div>
<div class="cell lk" style="left:1662px;top:862.10px">操作</div>
<div class="a" style="left:1587px;top:356px;width:109px;height:116px;background:#fff;border:1px solid #e4e4e4;border-radius:4px;box-shadow:0 1px 4px rgba(0,0,0,0.12)"></div>
<div class="a" style="left:1597px;top:368.0px;font-size:11px;line-height:14px;color:#333">编辑</div>
<div class="a" style="left:1597px;top:406.9px;font-size:11px;line-height:14px;color:#333">取消发布</div>
<div class="a" style="left:1597px;top:445.8px;font-size:11px;line-height:14px;color:#333">删除</div>
<div class="a" style="left:1588px;top:395.0px;width:107px;height:1px;background:#ececec"></div>
<div class="a" style="left:1588px;top:433.5px;width:107px;height:1px;background:#ececec"></div>
</div>
<svg class="a" style="left:10px;top:1046px" width="180" height="26" viewBox="0 0 180 26">
<path d="M4.5 17.5 L16.5 5.5" stroke="#999" stroke-width="5.5" stroke-linecap="round"/><path d="M13 6 L17 10" stroke="#fff" stroke-width="1.2"/>
<path d="M32.5 17 C32.5 6 40 5 40.5 10.5 C41 16 48 20 50 13" fill="none" stroke="#999" stroke-width="2.6" stroke-linecap="round"/>
<path d="M64 10 L74 5 L80 12.5 L71 19 Z" fill="#999"/><path d="M74 5 C78 6 81 9 81.5 12.5" stroke="#999" stroke-width="1.8" fill="none"/><path d="M64 10 L63.5 13.5 L67 16" fill="#999"/>
<path d="M96 16 L104 4.5 L112 9.5 L104.5 19.5 Z" fill="#999"/><path d="M96 16 Q95 18.5 98 20 L110 20" stroke="#999" stroke-width="1.8" fill="none"/><path d="M97.5 14 L104.5 18" stroke="#fff" stroke-width="1.2"/>
<path d="M126.7 4.9 L141.5 11.8 L136.5 13.5 L141.5 18.2 L139.2 20.4 L134.3 15.7 L131.5 19.5 Z" fill="#999"/>
<circle cx="165.3" cy="12.3" r="7.6" fill="none" stroke="#999" stroke-width="1.8"/><circle cx="165.3" cy="12.3" r="3.6" fill="#999"/>
</svg>
</body></html>
